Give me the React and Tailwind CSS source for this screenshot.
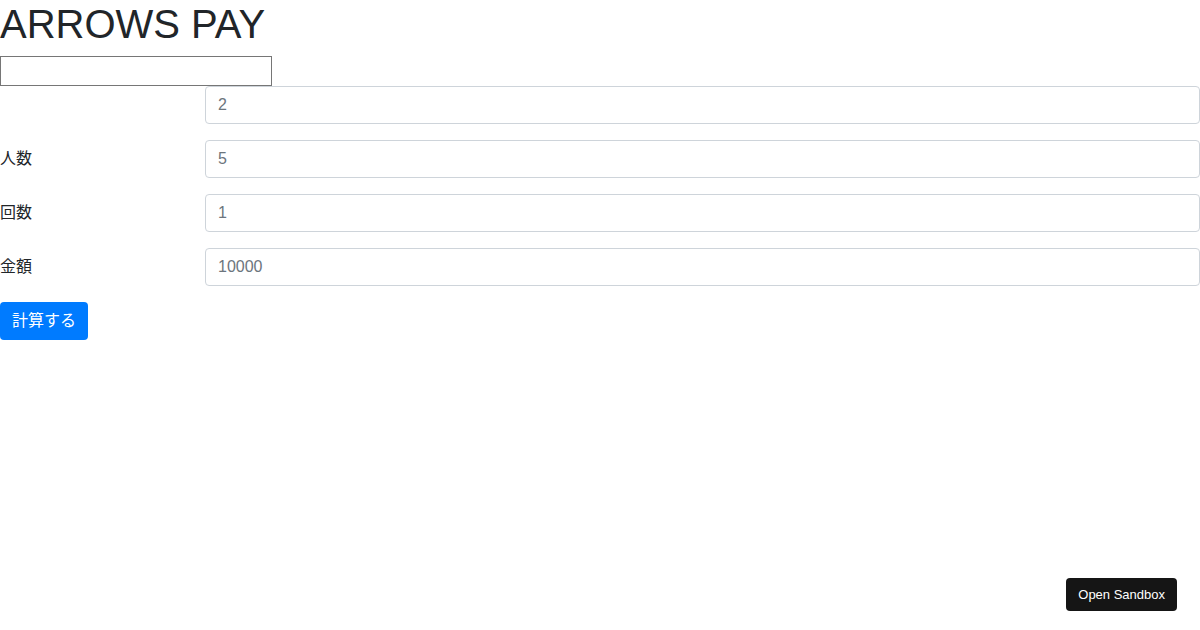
import React, { useState } from "react";

const rows = [
  { label: "", value: "2" },
  { label: "人数", value: "5" },
  { label: "回数", value: "1" },
  { label: "金額", value: "10000" },
];

const App = () => {
  const [code, setCode] = useState("");

  return (
    <div className="min-h-[630px] bg-white text-[#212529] font-['Liberation_Sans','Noto_Sans_CJK_JP',sans-serif]">
      <h1 className="text-[40px] leading-[48px] mb-2">ARROWS PAY</h1>

      <input
        type="text"
        value={code}
        onChange={(e) => setCode(e.target.value)}
        className="block w-[272px] h-[30px] border border-[#767676] px-1 text-[13px] outline-none"
      />

      {rows.map((row, i) => (
        <div key={i} className="flex items-center mb-4">
          <label className="w-[205px] text-base">{row.label}</label>
          <input
            type="text"
            placeholder={row.value}
            className="flex-1 h-[38px] border border-[#ced4da] rounded px-3 text-base text-[#495057] placeholder:text-[#6c757d] outline-none"
          />
        </div>
      ))}

      <button className="h-[38px] px-3 rounded bg-[#007bff] text-white text-base">
        計算する
      </button>

      {/* sandbox link over the page */}
      <a className="fixed right-[23px] bottom-[19px] h-[33px] px-[12px] flex items-center rounded bg-[#151515] text-white text-[13px] font-['Liberation_Sans',sans-serif]">
        Open Sandbox
      </a>
    </div>
  );
};

export default App;
